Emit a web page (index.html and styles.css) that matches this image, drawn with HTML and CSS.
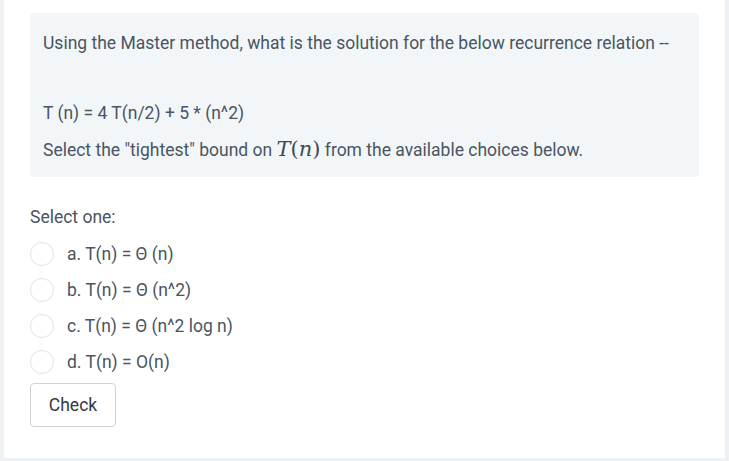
FILE: index.html
```html
<!DOCTYPE html>
<html lang="en">
<head>
    <meta charset="UTF-8">
    <meta name="viewport" content="width=device-width, initial-scale=1.0">
    <title>Question</title>
    <link rel="stylesheet" href="styles.css">
</head>
<body>
    <div class="panel">
        <div class="qtext">
            <p>Using the Master method, what is the solution for the below recurrence relation --</p>
            <p class="spacer"></p>
            <p>T (n) = 4 T(n/2) + 5 * (n^2)</p>
            <p>Select the "tightest" bound on <span class="math">T<span class="paren">(</span>n<span class="paren">)</span></span> from the available choices below.</p>
        </div>
        <div class="prompt">Select one:</div>
        <div class="answers">
            <label class="answer"><input type="radio" name="q1"><span>a. T(n) = &Theta; (n)</span></label>
            <label class="answer"><input type="radio" name="q1"><span>b. T(n) = &Theta; (n^2)</span></label>
            <label class="answer"><input type="radio" name="q1"><span>c. T(n) = &Theta; (n^2 log n)</span></label>
            <label class="answer"><input type="radio" name="q1"><span>d. T(n) = O(n)</span></label>
        </div>
        <button class="btn">Check</button>
    </div>
</body>
</html>
```

FILE: styles.css
```css
:root {
    --page-bg: #eef2f4;
    --box-bg: #f2f6f9;
    --text-color: #4a5560;
    --border-color: #ced4da;
}

body {
    font-family: Roboto, "Liberation Sans", sans-serif;
    font-size: 17.5px;
    margin: 0;
    padding: 0 4px 3px 4px;
    background-color: var(--page-bg);
    color: var(--text-color);
}

.panel {
    background-color: white;
    height: 458px;
    padding: 13px 26px 0 26px;
    box-sizing: border-box;
}

.qtext {
    background-color: var(--box-bg);
    border-radius: 4px;
    padding: 18px 13px 15px 13px;
}

.qtext p {
    margin: 0 0 13px 0;
    line-height: 24px;
    height: 24px;
}

.qtext p:last-child {
    margin-bottom: 0;
}

.qtext .spacer {
    height: 20px;
}

.math {
    font-family: "DejaVu Serif", "Liberation Serif", serif;
    font-style: italic;
    font-size: 21px;
    line-height: 20px;
    color: #3f4a54;
}

.math .paren {
    font-style: normal;
}

.prompt {
    margin-top: 28px;
    line-height: 24px;
}

.answers {
    margin-top: 7px;
}

.answer {
    display: flex;
    align-items: center;
    height: 36px;
    line-height: 24px;
}

.answer input {
    appearance: none;
    width: 24px;
    height: 24px;
    margin: 0 13px 0 0;
    border: 1px solid #dee2e6;
    border-radius: 50%;
    background: white;
    box-sizing: border-box;
}

.btn {
    margin-top: 3px;
    width: 86px;
    height: 44px;
    background-color: white;
    border: 1px solid var(--border-color);
    border-radius: 4px;
    font-family: Roboto, "Liberation Sans", sans-serif;
    font-size: 17.5px;
    color: #343a40;
    cursor: pointer;
}
```
